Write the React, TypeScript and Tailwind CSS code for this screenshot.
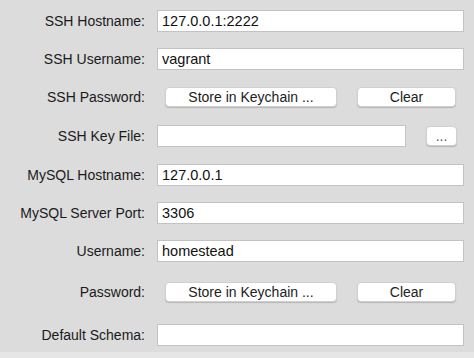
import React from "react";

const font = { fontFamily: '"Liberation Sans", Arial, sans-serif' };

function Label({ children }: { children: React.ReactNode }) {
  return (
    <div className="w-[145px] shrink-0 text-right text-[14px] leading-none text-[#1a1a1a]">
      {children}
    </div>
  );
}

function Field({ value, className = "" }: { value?: string; className?: string }) {
  return (
    <div
      className={
        "flex h-[22px] items-center border border-[#c3c3c3] bg-white pl-[4px] pt-[2px] text-[14.5px] text-[#111] " +
        className
      }
    >
      {value}
    </div>
  );
}

function Btn({ children, className = "" }: { children: React.ReactNode; className?: string }) {
  return (
    <div
      className={
        "flex h-[20px] items-center justify-center rounded-[4px] border border-[#d0d0d0] bg-white text-[14px] text-[#222] shadow-[0_1px_1px_rgba(0,0,0,0.18)] " +
        className
      }
    >
      {children}
    </div>
  );
}

function Row({
  label,
  top,
  children,
}: {
  label: string;
  top: string;
  children: React.ReactNode;
}) {
  return (
    <div className={"flex items-center gap-[12px] " + top}>
      <Label>{label}</Label>
      <div className="flex min-w-0 flex-1 items-center">{children}</div>
    </div>
  );
}

export default function App() {
  return (
    <div style={font} className="relative h-[358px] w-[474px] overflow-hidden bg-[#dcdcdc]">
      <div className="pr-[10px] pt-[10px]">
        <Row label="SSH Hostname:" top="">
          <Field value="127.0.0.1:2222" className="flex-1" />
        </Row>
        <Row label="SSH Username:" top="mt-[16px]">
          <Field value="vagrant" className="flex-1" />
        </Row>
        <Row label="SSH Password:" top="mt-[17px]">
          <Btn className="ml-[8px] w-[172px]">Store in Keychain ...</Btn>
          <Btn className="ml-[20px] w-[99px]">Clear</Btn>
        </Row>
        <Row label="SSH Key File:" top="mt-[18px]">
          <Field className="w-[249px]" />
          <Btn className="ml-[20px] w-[31px] text-[10px] text-[#555]">...</Btn>
        </Row>
        <Row label="MySQL Hostname:" top="mt-[17px]">
          <Field value="127.0.0.1" className="flex-1" />
        </Row>
        <Row label="MySQL Server Port:" top="mt-[16px]">
          <Field value="3306" className="flex-1" />
        </Row>
        <Row label="Username:" top="mt-[16px]">
          <Field value="homestead" className="flex-1" />
        </Row>
        <Row label="Password:" top="mt-[20px]">
          <Btn className="ml-[8px] w-[172px]">Store in Keychain ...</Btn>
          <Btn className="ml-[20px] w-[99px]">Clear</Btn>
        </Row>
        <Row label="Default Schema:" top="mt-[22px]">
          <Field className="flex-1" />
        </Row>
      </div>
      <div className="absolute bottom-0 left-0 right-0 h-[6px] bg-[#e6e6e6]" />
    </div>
  );
}
